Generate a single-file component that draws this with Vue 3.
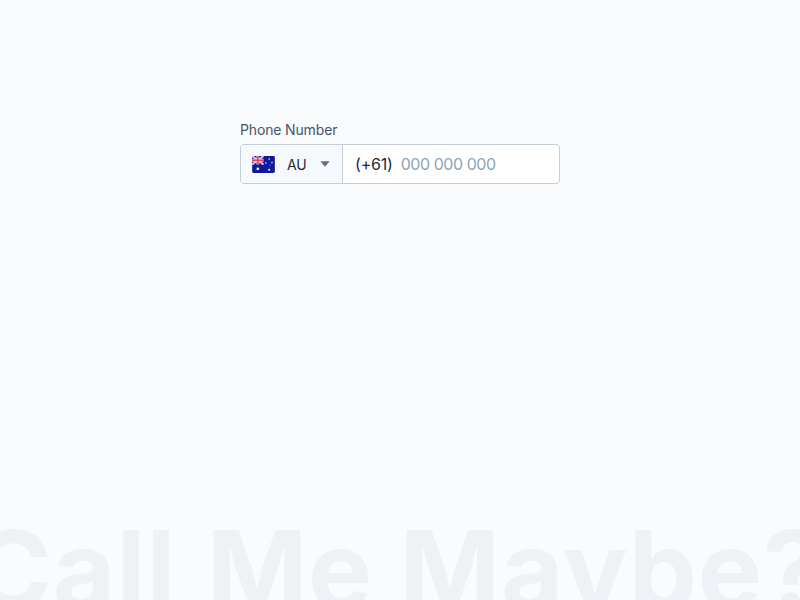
<template>
  <div class="page">
    <div class="field">
      <label class="label" for="phone">Phone Number</label>
      <div class="control">
        <button class="country" type="button">
          <svg class="flag" viewBox="0 0 24 18" width="23" height="17">
            <rect width="24" height="18" rx="1.5" fill="#10189c" />
            <path d="M0 0L12 9M12 0L0 9" stroke="#f3c3cf" stroke-width="2" />
            <path d="M6 0V9M0 4.5H12" stroke="#f6d5dd" stroke-width="3" />
            <path d="M6 0V9M0 4.5H12" stroke="#e2405c" stroke-width="1.7" />
            <circle cx="6" cy="13.6" r="1.4" fill="#fff" />
            <circle cx="18" cy="3.2" r="0.8" fill="#fff" />
            <circle cx="14.5" cy="7.4" r="0.8" fill="#fff" />
            <circle cx="21" cy="6.8" r="0.8" fill="#fff" />
            <circle cx="18" cy="14.6" r="1" fill="#fff" />
            <circle cx="19" cy="9.6" r="0.5" fill="#fff" />
          </svg>
          <span class="code">AU</span>
          <svg class="caret" viewBox="0 0 10 6" width="10" height="6">
            <path d="M0.4 0.3H9.6L5 5.8Z" fill="#5f6f80" />
          </svg>
        </button>
        <div class="entry">
          <span class="prefix">(+61)</span>
          <input id="phone" class="input" type="text" placeholder="000 000 000" />
        </div>
      </div>
    </div>
    <div class="slogan"><span class="first">Call</span> Me Maybe?</div>
  </div>
</template>

<script setup>
</script>

<style>
html, body { margin: 0; background: #fafbfd; }
</style>

<style scoped>
.page {
  width: 800px;
  height: 600px;
  overflow: hidden;
  background: #fafbfd;
  font-family: Inter, "Liberation Sans", sans-serif;
  display: flex;
  flex-direction: column;
  align-items: center;
}
.field {
  flex: none;
  width: 320px;
  margin-top: 120px;
  display: flex;
  flex-direction: column;
  gap: 4px;
}
.label {
  font-size: 14px;
  line-height: 20px;
  letter-spacing: -0.15px;
  color: #475569;
}
.control {
  display: flex;
  height: 40px;
  box-sizing: border-box;
  border: 1px solid #c3ced9;
  border-radius: 4px;
  overflow: hidden;
  background: #fff;
}
.country {
  flex: none;
  width: 102px;
  box-sizing: border-box;
  padding: 0 12px 0 11px;
  margin: 0;
  border: 0;
  border-right: 1px solid #c3ced9;
  background: #f6f9fc;
  display: flex;
  align-items: center;
  font-family: inherit;
}
.flag { flex: none; }
.code {
  margin-left: 12px;
  font-size: 14px;
  letter-spacing: -0.2px;
  color: #1e293b;
}
.caret {
  margin-left: auto;
}
.entry {
  flex: 1;
  min-width: 0;
  display: flex;
  align-items: center;
  padding: 0 12px;
  font-size: 16px;
}
.prefix {
  color: #1e293b;
  letter-spacing: -0.2px;
  margin-right: 8px;
}
.input {
  flex: 1;
  min-width: 0;
  border: 0;
  padding: 0;
  outline: none;
  background: transparent;
  font: inherit;
  letter-spacing: -0.45px;
  color: #1e293b;
}
.input::placeholder {
  color: #8fa3b3;
  opacity: 1;
}
.slogan {
  flex: none;
  margin-top: 318px;
  margin-left: -4px;
  white-space: nowrap;
  font-size: 108px;
  line-height: 136px;
  letter-spacing: 0.8px;
  font-weight: 700;
  color: #eef1f5;
}
.first {
  margin-right: 4px;
}
</style>
